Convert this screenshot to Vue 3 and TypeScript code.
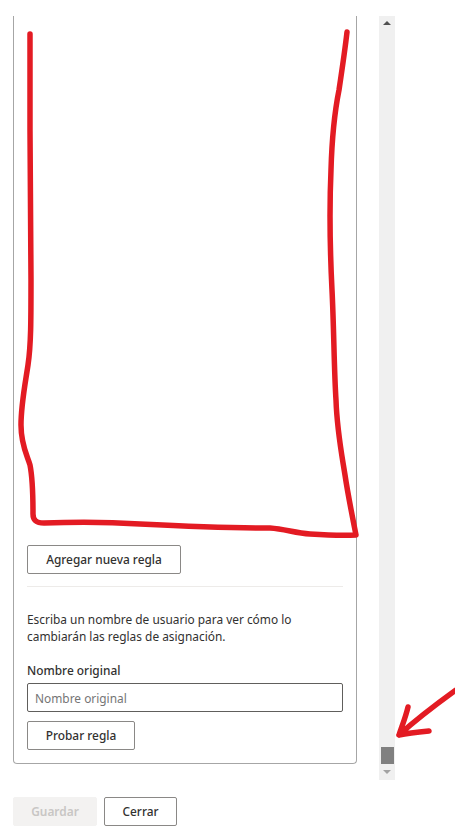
<script setup lang="ts">
const hint = 'Escriba un nombre de usuario para ver cómo lo cambiarán las reglas de asignación.'
const leftStroke = 'M30 34 L30 130 L31 280 C31 320 31 345 28 365 C25 385 21 405 21 425 C21 445 27 455 30 465 C33 480 33 500 33 514 C33 520 36 523 44 523 C70 522 110 522 140 524 C180 526 230 528 270 528 C285 529 295 533 310 534 C325 535 340 536 356 535 C353 520 348 495 345 475 C341 450 337 430 336 400 C334 370 334 330 332 290 C330 250 329 215 331 170 C332 135 335 110 339 90 C342 70 345 50 347 32'
const arrowStroke = 'M456 690 C438 703 418 718 399 735 M408 707 C406 716 402 726 399 735 C408 733 418 732 429 731'
</script>

<template>
  <div class="page">
    <div class="top">
      <section class="card">
        <div class="blank"></div>
        <button class="btn add" type="button">Agregar nueva regla</button>
        <hr class="rule" />
        <p class="hint">{{ hint }}</p>
        <label class="label" for="orig">Nombre original</label>
        <input id="orig" class="input" type="text" placeholder="Nombre original" />
        <button class="btn test" type="button">Probar regla</button>
      </section>
      <div class="scrollbar">
        <span class="tri up"></span>
        <span class="thumb"></span>
        <span class="tri down"></span>
      </div>
    </div>
    <div class="actions">
      <button class="btn save" type="button" disabled>Guardar</button>
      <button class="btn close" type="button">Cerrar</button>
    </div>
    <svg class="ink" width="455" height="833" viewBox="0 0 455 833" fill="none">
      <path :d="leftStroke" stroke="#e31b23" stroke-width="5.5" stroke-linecap="round" stroke-linejoin="round" />
      <path :d="arrowStroke" stroke="#e31b23" stroke-width="5.5" stroke-linecap="round" stroke-linejoin="round" />
    </svg>
  </div>
</template>

<style>
html, body { margin: 0; background: #fff; }
</style>

<style scoped>
.page {
  position: relative;
  width: 455px;
  height: 833px;
  overflow: hidden;
  padding: 16px 0 0 13px;
  box-sizing: border-box;
  font-family: "Noto Sans", "Open Sans", sans-serif;
  font-size: 11.9px;
  color: #323130;
}
.top {
  display: flex;
  align-items: flex-start;
  gap: 22px;
}
.card {
  width: 344px;
  height: 748px;
  box-sizing: border-box;
  border: 1px solid #a6a6a6;
  border-top: none;
  border-radius: 0 0 4px 4px;
  padding: 0 13px 13px;
  display: flex;
  flex-direction: column;
  align-items: flex-start;
}
.blank { flex: 1; }
.btn {
  box-sizing: border-box;
  height: 29px;
  font: inherit;
  font-weight: 500;
  color: #323130;
  background: #fff;
  border: 1px solid #8a8886;
  border-radius: 2px;
  padding: 0 0 2px;
}
.add { width: 154px; }
.rule {
  width: 316px;
  height: 1px;
  margin: 12px 0 0;
  border: none;
  background: #edebe9;
}
.hint {
  margin: 24px 0 0;
  width: 316px;
  line-height: 17px;
}
.label {
  margin-top: 17px;
  font-weight: 500;
  line-height: 17px;
}
.input {
  box-sizing: border-box;
  width: 316px;
  height: 29px;
  margin-top: 4px;
  padding: 1px 7px 0;
  font: inherit;
  color: #323130;
  border: 1px solid #605e5c;
  border-radius: 2px;
  outline: none;
}
.input::placeholder { color: #757575; opacity: 1; }
.test { width: 108px; margin-top: 9px; }
.scrollbar {
  position: relative;
  width: 16px;
  height: 764px;
  background: #f0f0f0;
  display: flex;
  flex-direction: column;
  align-items: center;
}
.tri {
  width: 0;
  height: 0;
  border-left: 4px solid transparent;
  border-right: 4px solid transparent;
}
.tri.up {
  margin-top: 5px;
  border-bottom: 4px solid #505050;
}
.thumb {
  width: 13px;
  height: 17px;
  margin-top: auto;
  background: #808080;
}
.tri.down {
  margin-top: 6px;
  margin-bottom: 6px;
  border-top: 4px solid #a3a3a3;
}
.actions {
  display: flex;
  gap: 7px;
  margin-top: 17px;
}
.save {
  width: 84px;
  background: #f3f2f1;
  border-color: #f3f2f1;
  color: #c8c6c4;
  font-weight: 600;
}
.close { width: 73px; }
.ink {
  position: absolute;
  left: 0;
  top: 0;
  pointer-events: none;
}
</style>
